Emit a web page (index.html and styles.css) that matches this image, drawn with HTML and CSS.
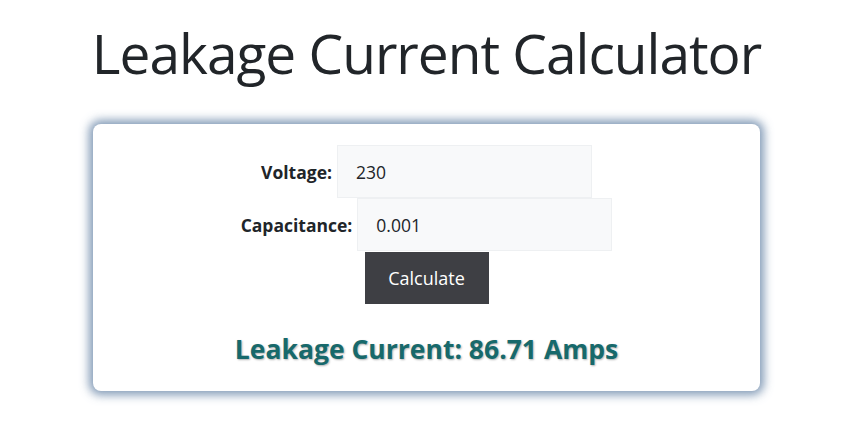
FILE: index.html
```html
<!DOCTYPE html>
<html>
<head>
  <title>Leakage Current Calculator</title>
  <link rel="stylesheet" href="styles.css">
</head>
<body>
  <h1 class="title">Leakage Current Calculator</h1>
  <div class="card">
    <div class="field-row">
      <label class="field-label" for="voltage">Voltage:</label>
      <input id="voltage" class="field-input" type="text" value="230">
    </div>
    <div class="field-row">
      <label class="field-label" for="capacitance">Capacitance:</label>
      <input id="capacitance" class="field-input" type="text" value="0.001">
    </div>
    <div class="field-row">
      <button class="calc-btn">Calculate</button>
    </div>
    <p class="result">Leakage Current: 86.71 Amps</p>
  </div>
</body>
</html>
```

FILE: styles.css
```css
body{
  margin: 0;
  padding-bottom: 30px;
  background-color: white;
  font-family: "Open Sans", "Noto Sans", sans-serif;
  color: #212529;
}

.title{
  margin: 0;
  padding-top: 20px;
  text-align: center;
  font-size: 55px;
  font-weight: 400;
  letter-spacing: -1px;
  line-height: 1.2;
}

.card{
  width: 667px;
  margin: 38px auto 0;
  padding: 21px 0 24px;
  box-sizing: border-box;
  background-color: white;
  border-radius: 8px;
  box-shadow: 0 0 10px 4px rgba(100, 130, 165, 0.8);
}

.field-row{
  display: flex;
  justify-content: center;
  align-items: center;
}

.field-label{
  font-weight: 700;
  font-size: 17.5px;
  margin-right: 5px;
}

.field-input{
  width: 255px;
  height: 53px;
  box-sizing: border-box;
  padding: 0 18px;
  background-color: #f8f9fa;
  border: 1px solid #eef0f2;
  font-family: "Open Sans", "Noto Sans", sans-serif;
  font-size: 17.5px;
  color: #212529;
  outline: none;
}

.calc-btn{
  margin-top: 1px;
  width: 124px;
  height: 52px;
  background-color: #3e3f44;
  color: white;
  border: none;
  font-family: "Open Sans", "Noto Sans", sans-serif;
  font-size: 18px;
  cursor: pointer;
}

.result{
  margin: 27px 0 0;
  text-align: center;
  font-size: 26.5px;
  font-weight: 700;
  color: #17696b;
  text-shadow: 1px 1px 2px rgba(0, 0, 0, 0.3);
}
```
